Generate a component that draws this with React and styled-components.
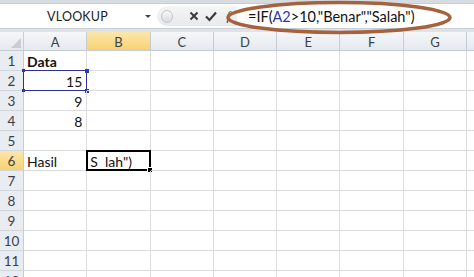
import React from "react"
import styled, { createGlobalStyle, css } from "styled-components"

const GlobalStyle = createGlobalStyle`
  html, body {
    margin: 0;
    padding: 0;
    background: #ffffff;
    overflow: hidden;
  }
  body {
    font-family: Lato, "Open Sans", "Liberation Sans", sans-serif;
    width: 474px;
    height: 277px;
  }
`

const Page = styled.div`
  position: relative;
  width: 474px;
  height: 277px;
  overflow: hidden;
  background: #dfe3e8;
`

const RibbonEdge = styled.div`
  height: 3px;
  background: #d7dce2;
  border-bottom: 1px solid #c9ced6;
`

const FormulaBar = styled.div`
  display: flex;
  align-items: center;
  height: 24px;
  background: #ffffff;
  border-bottom: 1px solid #c8ced6;
`

const NameBox = styled.div`
  display: flex;
  align-items: center;
  width: 157px;
  height: 100%;
  box-sizing: border-box;
  padding-right: 6px;
`

const NameText = styled.span`
  flex: 1;
  text-align: center;
  font-size: 12.5px;
  color: #222;
  letter-spacing: 0.2px;
  padding-left: 10px;
`

const DropArrow = styled.span`
  width: 0;
  height: 0;
  border-left: 3px solid transparent;
  border-right: 3px solid transparent;
  border-top: 3px solid #444;
  margin-top: 1px;
`

const ButtonGroup = styled.div`
  display: flex;
  align-items: center;
  gap: 0;
  width: 80px;
  height: 20px;
  background: linear-gradient(#f4f5f7, #e7e9ed);
  border-radius: 10px 0 0 10px;
  box-sizing: border-box;
  padding-left: 4px;
`

const Grip = styled.span`
  width: 11px;
  height: 11px;
  border-radius: 50%;
  background: linear-gradient(#fafafa, #d7dadf);
  border: 1px solid #c3c7cd;
  margin-right: 12px;
`

const BarButton = styled.span`
  display: flex;
  align-items: center;
  justify-content: center;
  width: 19px;
  height: 16px;
  color: #3c3c3c;
  font-size: 13px;
  font-style: ${(p) => (p.italic ? "italic" : "normal")};
  font-family: ${(p) => (p.italic ? '"Liberation Serif", serif' : "inherit")};
`

const FormulaText = styled.div`
  flex: 1;
  padding-left: 11px;
  font-size: 14.5px;
  color: #111;
  white-space: pre;
`

const Ref = styled.span`
  color: #2e3aa6;
`

const Gap = styled.div`
  height: 3px;
`

const Sheet = styled.div`
  display: grid;
  grid-template-columns: 24px repeat(8, 63.3px);
  grid-template-rows: 19px;
  grid-auto-rows: 20px;
  background: #ffffff;
`

const headerBase = css`
  display: flex;
  align-items: center;
  justify-content: center;
  box-sizing: border-box;
  font-size: 13px;
  color: #3b3f4a;
  border-right: 1px solid #c5ccd5;
  border-bottom: 1px solid #c5ccd5;
  background: ${(p) =>
    p.selected
      ? "linear-gradient(#fbe7ab, #f8d272)"
      : "linear-gradient(#f5f7f9, #e5e9ee)"};
`

const Corner = styled.div`
  ${headerBase};
  position: relative;
  &::after {
    content: "";
    position: absolute;
    right: 2px;
    bottom: 2px;
    border-left: 10px solid transparent;
    border-bottom: 10px solid #c9cdd2;
  }
`

const ColHeader = styled.div`
  ${headerBase};
  padding-top: 1px;
`

const RowHeader = styled.div`
  ${headerBase};
  background: ${(p) =>
    p.selected ? "linear-gradient(#fbe7ab, #f8d272)" : "#e9ecf0"};
  border-bottom-color: #d0d6de;
  font-size: 13.5px;
`

const Cell = styled.div`
  position: relative;
  display: flex;
  align-items: center;
  justify-content: ${(p) => (p.right ? "flex-end" : "flex-start")};
  box-sizing: border-box;
  padding: 1px 4px 0 3px;
  border-right: 1px solid #dadcdf;
  border-bottom: 1px solid #dadcdf;
  font-size: 14px;
  font-weight: ${(p) => (p.bold ? 700 : 400)};
  color: #111;
  white-space: pre;
`

const RangeBox = styled.div`
  position: absolute;
  left: -1px;
  top: -1px;
  right: -1px;
  bottom: -1px;
  border: 1px solid #2e3192;
  pointer-events: none;
`

const Handle = styled.span`
  position: absolute;
  width: ${(p) => p.size}px;
  height: ${(p) => p.size}px;
  background: #2e3aa8;
  ${(p) => (p.left ? "left" : "right")}: -${(p) => p.size / 2 + 0.5}px;
  ${(p) => (p.top ? "top" : "bottom")}: -${(p) => p.size / 2 + 0.5}px;
`

const ActiveBox = styled.div`
  position: absolute;
  left: -1px;
  top: -1px;
  right: -1px;
  bottom: -1px;
  border: 2px solid #000;
  pointer-events: none;
  &::after {
    content: "";
    position: absolute;
    right: -4px;
    bottom: -4px;
    width: 4px;
    height: 4px;
    background: #000;
    border: 1px solid #fff;
  }
`

const Highlight = styled.svg`
  position: absolute;
  left: 0;
  top: 0;
  pointer-events: none;
`

const columns = ["A", "B", "C", "D", "E", "F", "G", ""]

const cells = {
  "A1": { text: "Data", bold: true },
  "A2": { text: "15", right: true, range: true },
  "A3": { text: "9", right: true },
  "A4": { text: "8", right: true },
  "A6": { text: "Hasil" },
  "B6": { text: "S  lah\")", active: true },
}

export default function App() {
  const rows = Array.from({ length: 12 }, (_, i) => i + 1)
  return (
    <Page>
      <GlobalStyle />
      <RibbonEdge />
      <FormulaBar>
        <NameBox>
          <NameText>VLOOKUP</NameText>
          <DropArrow />
        </NameBox>
        <ButtonGroup>
          <Grip />
          <BarButton>
            <svg width="10" height="10" viewBox="0 0 10 10">
              <path d="M1.5 1.5 L8.5 8.5 M8.5 1.5 L1.5 8.5" stroke="#3a3a3a" strokeWidth="2" />
            </svg>
          </BarButton>
          <BarButton>
            <svg width="12" height="11" viewBox="0 0 12 11">
              <path d="M1 5.5 L4.5 9 L11 1.5" stroke="#3a3a3a" strokeWidth="2.2" fill="none" />
            </svg>
          </BarButton>
          <BarButton italic>f</BarButton>
        </ButtonGroup>
        <FormulaText>
          =IF(<Ref>A2</Ref>&gt;10,"Benar","Salah")
        </FormulaText>
      </FormulaBar>
      <Gap />
      <Sheet>
        <Corner />
        {columns.map((c, i) => (
          <ColHeader key={i} selected={c === "B"}>
            {c}
          </ColHeader>
        ))}
        {rows.map((r) => (
          <React.Fragment key={r}>
            <RowHeader selected={r === 6}>{r}</RowHeader>
            {columns.map((c, i) => {
              const cell = cells[c + r]
              return (
                <Cell key={i} bold={cell?.bold} right={cell?.right}>
                  {cell?.text}
                  {cell?.range && (
                    <RangeBox>
                      <Handle size={3} left top />
                      <Handle size={3} left />
                      <Handle size={4} top />
                      <Handle size={4} />
                    </RangeBox>
                  )}
                  {cell?.active && <ActiveBox />}
                </Cell>
              )
            })}
          </React.Fragment>
        ))}
      </Sheet>
      <Highlight width="474" height="40" viewBox="0 0 474 40">
        <ellipse
          cx="339"
          cy="17.5"
          rx="111"
          ry="15"
          fill="none"
          stroke="#a5623e"
          strokeWidth="3.5"
        />
      </Highlight>
    </Page>
  )
}
